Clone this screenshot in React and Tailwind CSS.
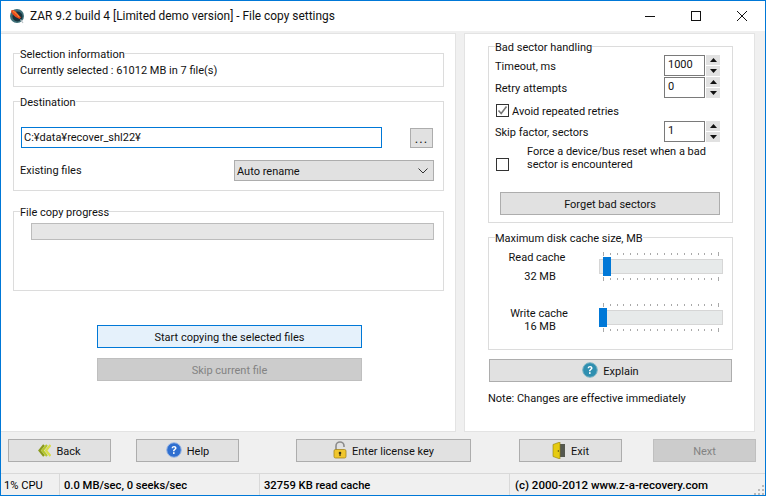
// ZAR file copy settings window
const ui = "font-['Roboto','Liberation_Sans',sans-serif]";

function Group({ title, className, children }) {
  return (
    <fieldset className={"border border-[#dcdcdc] " + className}>
      <legend className="ml-[6px] h-[14px] text-[11px] leading-[14px] text-[#111]">
        <span className="block translate-y-[2px]">{title}</span>
      </legend>
      {children}
    </fieldset>
  );
}

function Btn({ children, className, disabled }) {
  return (
    <div
      className={
        "flex items-center justify-center gap-[5px] h-[23px] pt-[3px] border text-[11px] " +
        (disabled ? "bg-[#cccccc] border-[#bfbfbf] text-[#838383] " : "bg-[#e1e1e1] border-[#adadad] text-[#111] ") +
        className
      }
    >
      {children}
    </div>
  );
}

function Spinner({ value }) {
  return (
    <div className="flex items-center h-[21px]">
      <div className="w-[41px] h-[21px] border border-[#7a7a7a] bg-white pl-[3px] text-[11px] leading-[17px] text-[#111]">{value}</div>
      <div className="ml-[1px] w-[14px] flex flex-col gap-[1px]">
        <div className="h-[10px] bg-[#e1e1e1] flex items-center justify-center">
          <svg width="7" height="4" viewBox="0 0 7 4"><path d="M3.5 0 7 4H0z" fill="#111" /></svg>
        </div>
        <div className="h-[10px] bg-[#e1e1e1] flex items-center justify-center">
          <svg width="7" height="4" viewBox="0 0 7 4"><path d="M0 0h7L3.5 4z" fill="#111" /></svg>
        </div>
      </div>
    </div>
  );
}

function Ticks({ className }) {
  const ticks = Array.from({ length: 18 });
  return (
    <div className={"flex justify-between items-center h-[4px] pl-[4px] pr-[4px] " + className}>
      {ticks.map((_, i) => (
        <div key={i} className={"w-px bg-[#a9a9a9] " + (i === 0 || i === 17 ? "h-[4px]" : "h-[2px]")} />
      ))}
    </div>
  );
}

function Slider({ thumbClass, className }) {
  return (
    <div className={"w-[124px] " + className}>
      <Ticks />
      <div className="relative mt-[3px] h-[15px] bg-[#e7eaea] border border-[#d6d6d6]">
        <div className={"absolute top-[-3px] w-[8px] h-[19px] bg-[#0078d7] " + thumbClass} />
      </div>
      <Ticks className="mt-[3px]" />
    </div>
  );
}

function Logo() {
  return (
    <svg width="16" height="16" viewBox="0 0 16 16">
      <circle cx="8" cy="8" r="7" fill="#3f6f78" />
      <circle cx="8.500" cy="8.500" r="5" fill="#17323c" />
      <path d="M2 2.500C4 1 6 2.500 8 5l4 4.500-1.500 1.500C8 10 5 8 3.500 6 2.500 4.800 2 3.500 2 2.500z" fill="#ea4a1e" />
      <path d="M4 3.500C6 4 8 6 10 9" stroke="#f7a23a" strokeWidth="1" fill="none" />
      <path d="M11.500 11.500 14 15" stroke="#b9c2c6" strokeWidth="1.200" />
    </svg>
  );
}

function HelpIcon({ color, edge }) {
  return (
    <svg className="-translate-y-[2px]" width="16" height="16" viewBox="0 0 16 16">
      <circle cx="8" cy="8" r="7.300" fill={color} stroke={edge} strokeWidth="1" />
      <path d="M5.600 6.200C5.700 4.700 6.800 4 8.100 4c1.400 0 2.400.8 2.400 2 0 1-.6 1.500-1.300 2-.5.4-.7.7-.7 1.300H7c0-1 .3-1.500 1-2 .6-.4.9-.7.9-1.200S8.500 5.300 8 5.300c-.6 0-1 .4-1 .9z" fill="#fff" />
      <rect x="7" y="10.200" width="1.600" height="1.700" fill="#fff" />
    </svg>
  );
}

function BackIcon() {
  return (
    <svg className="-translate-y-[2px]" width="13" height="13" viewBox="0 0 13 13">
      <path d="M6 1 1.500 6.500 6 12" stroke="#8a9a1c" strokeWidth="2.200" fill="none" />
      <path d="M9 1 4.500 6.500 9 12" stroke="#b5c72a" strokeWidth="2.200" fill="none" />
      <path d="M12.500 1 8 6.500l4.500 5.500" stroke="#d8dd4a" strokeWidth="2.200" fill="none" />
    </svg>
  );
}

function LockIcon() {
  return (
    <svg className="-translate-y-[2px]" width="14" height="18" viewBox="0 0 14 18">
      <path d="M3 9V5a4 4 0 0 1 8 0v1" stroke="#8c8c8c" strokeWidth="1.600" fill="none" />
      <rect x="1" y="8.500" width="12" height="8.500" rx="1.500" fill="#f0c62d" stroke="#a5861c" strokeWidth="0.800" />
      <circle cx="7" cy="12" r="1.300" fill="#3b3413" />
      <rect x="6.400" y="12" width="1.200" height="3" fill="#3b3413" />
    </svg>
  );
}

function DoorIcon() {
  return (
    <svg className="-translate-y-[2px]" width="14" height="17" viewBox="0 0 14 17">
      <rect x="7" y="2" width="6" height="13" fill="#55584f" />
      <path d="M1 2.500 8 0v17l-7-2.500z" fill="#e6cb12" stroke="#8d7d10" strokeWidth="0.600" />
      <rect x="5.800" y="8" width="1" height="2" fill="#6b5f10" />
    </svg>
  );
}

export default function App() {
  return (
    <div className={"w-[766px] h-[496px] flex flex-col overflow-hidden bg-[#f0f0f0] border border-[#0078d7] " + ui}>
      {/* title bar */}
      <div className="h-[30px] shrink-0 bg-white flex items-center">
        <div className="ml-[8px]"><Logo /></div>
        <div className="ml-[5px] pt-[2px] text-[11.9px] text-[#111]">ZAR 9.2 build 4 [Limited demo version] - File copy settings</div>
        <div className="ml-auto flex items-center">
          <div className="w-[46px] flex justify-center">
            <svg width="10" height="10" viewBox="0 0 10 10"><path d="M0 5.500h10" stroke="#111" /></svg>
          </div>
          <div className="w-[46px] flex justify-center">
            <svg width="10" height="10" viewBox="0 0 10 10"><rect x="0.500" y="0.500" width="9" height="9" fill="none" stroke="#111" /></svg>
          </div>
          <div className="w-[46px] flex justify-center">
            <svg width="10" height="10" viewBox="0 0 10 10"><path d="M0 0l10 10M10 0 0 10" stroke="#111" /></svg>
          </div>
        </div>
      </div>

      {/* panels */}
      <div className="flex mt-[2px] h-[399px] shrink-0">
        <div className="w-[455px] bg-white border border-[#e3e3e3] border-l-0 pl-[12px] pt-[12px]">
          <Group title="Selection information" className="w-[431px] h-[41px]">
            <div className="pl-[6px] text-[11px] leading-[14px] mt-[4px] text-[#111]">Currently selected : 61012 MB in 7 file(s)</div>
          </Group>
          <Group title="Destination" className="w-[431px] h-[97px] mt-[7px]">
            <div className="flex items-center mt-[19px] pl-[7px]">
              <div className="w-[361px] h-[21px] border border-[#0078d7] bg-white pl-[2px] text-[11px] leading-[19px] text-[#111]">C:¥data¥recover_shl22¥</div>
              <Btn className="ml-[28px] w-[23px] !h-[20px]"><span className="text-[13px] tracking-[1px]">...</span></Btn>
            </div>
            <div className="flex items-center mt-[12px] pl-[6px]">
              <div className="w-[214px] pt-[2px] text-[11px] text-[#111]">Existing files</div>
              <div className="w-[200px] h-[21px] bg-[#e1e1e1] border border-[#adadad] flex items-center pl-[2px] pr-[5px] pt-[3px] text-[11px] text-[#111]">
                Auto rename
                <svg className="ml-auto -translate-y-px" width="10" height="6" viewBox="0 0 10 6"><path d="M0.500 0.500 5 5l4.500-4.500" stroke="#333" fill="none" /></svg>
              </div>
            </div>
          </Group>
          <Group title="File copy progress" className="w-[431px] h-[87px] mt-[13px]">
            <div className="ml-[17px] w-[403px] h-[17px] bg-[#e6e6e6] border border-[#bcbcbc] mt-[5px]" />
          </Group>
          <div className="flex flex-col gap-[10px] mt-[34px] ml-[84px] w-[265px]">
            <Btn className="!bg-[#e5f1fb] !border-[#0078d7]">Start copying the selected files</Btn>
            <Btn disabled>Skip current file</Btn>
          </div>
        </div>

        <div className="ml-[8px] w-[291px] bg-white border border-[#e3e3e3] pl-[23px] pt-[5px]">
          <Group title="Bad sector handling" className="w-[245px] h-[184px]">
            <div className="pl-[6px]">
              <div className="flex items-center mt-[2px]">
                <div className="w-[169px] pt-[4px] text-[11px] text-[#111]">Timeout, ms</div>
                <Spinner value="1000" />
              </div>
              <div className="flex items-center mt-[1px]">
                <div className="w-[169px] pt-[4px] text-[11px] text-[#111]">Retry attempts</div>
                <Spinner value="0" />
              </div>
              <div className="flex items-center h-[13px] mt-[6px] ml-[1px] text-[11px] text-[#111]">
                <div className="w-[13px] h-[13px] border border-[#333] flex items-center justify-center">
                  <svg width="11" height="11" viewBox="0 0 11 11"><path d="M1.500 5.500 4.200 8.500 9.500 1.500" stroke="#777" strokeWidth="1.600" fill="none" /></svg>
                </div>
                <span className="ml-[3px] pt-[3px]">Avoid repeated retries</span>
              </div>
              <div className="flex items-center mt-[4px]">
                <div className="w-[169px] pt-[4px] text-[11px] text-[#111]">Skip factor, sectors</div>
                <Spinner value="1" />
              </div>
              <div className="flex items-start h-[27px] mt-[2px] ml-[1px]">
                <div className="w-[13px] h-[13px] border border-[#333] mt-[14px]" />
                <div className="ml-[18px] w-[200px] pt-px text-[11px] leading-[13px] text-[#111]">Force a device/bus reset when a bad sector is encountered</div>
              </div>
              <Btn className="w-[220px] mt-[21px] ml-[5px]">Forget bad sectors</Btn>
            </div>
          </Group>

          <Group title="Maximum disk cache size, MB" className="w-[245px] h-[120px] mt-[7px]">
            <div className="flex mt-[8px] pl-[6px]">
              <div className="w-[104px] text-center text-[11px] text-[#111] leading-[14px]">
                <div className="mt-[-1px] pr-[20px]">Read cache</div>
                <div className="mt-[5px] pr-[14px]">32 MB</div>
              </div>
              <Slider thumbClass="left-[3px]" />
            </div>
            <div className="flex mt-[19px] pl-[6px]">
              <div className="w-[104px] text-center text-[11px] text-[#111] leading-[14px]">
                <div className="mt-[4px] pr-[16px]">Write cache</div>
                <div className="mt-[-1px] pr-[14px]">16 MB</div>
              </div>
              <Slider thumbClass="left-[-1px]" />
            </div>
          </Group>

          <Btn className="w-[243px] mt-[9px] ml-[1px]"><HelpIcon color="#2f8fb0" edge="#7fb5c4" />Explain</Btn>
          <div className="mt-[9px] text-[11px] text-[#111]">Note: Changes are effective immediately</div>
        </div>
      </div>

      {/* bottom buttons */}
      <div className="flex items-center mt-[7px] ml-[7px] shrink-0">
        <Btn className="w-[103px]"><BackIcon />Back</Btn>
        <Btn className="w-[103px] ml-[25px]"><HelpIcon color="#2f6fd0" edge="#9db8e4" />Help</Btn>
        <Btn className="w-[175px] ml-[57px]"><LockIcon />Enter license key</Btn>
        <Btn className="w-[103px] ml-[48px]"><DoorIcon />Exit</Btn>
        <Btn disabled className="w-[103px] ml-[31px]">Next</Btn>
      </div>

      {/* status bar */}
      <div className="mt-[11px] flex-1 border-t border-[#d9d9d9] flex items-center text-[11.2px] text-black font-medium relative">
        <div className="w-[59px] h-full pl-[3px] pt-[3px] flex items-center border-r border-[#d9d9d9] font-normal">1% CPU</div>
        <div className="w-[200px] h-full pl-[4px] pt-[3px] flex items-center border-r border-[#d9d9d9]">0.0 MB/sec, 0 seeks/sec</div>
        <div className="w-[250px] h-full pl-[4px] pt-[3px] flex items-center border-r border-[#d9d9d9]">32759 KB read cache</div>
        <div className="pl-[5px] pt-[3px] text-[11.5px]">(c) 2000-2012 www.z-a-recovery.com</div>
        <svg className="absolute right-0 bottom-0" width="11" height="11" viewBox="0 0 11 11">
          <path d="M8 1h2v2H8zM4 5h2v2H4zM8 5h2v2H8zM0 9h2v2H0zM4 9h2v2H4zM8 9h2v2H8z" fill="#b8b8b8" />
        </svg>
      </div>
    </div>
  );
}
